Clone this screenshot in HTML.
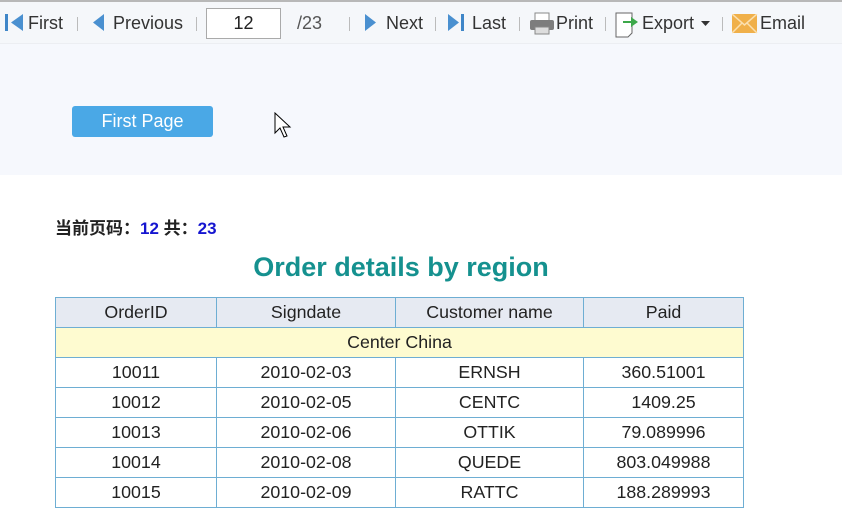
<!DOCTYPE html>
<html><head><style>
body{margin:0;width:842px;height:530px;background:#fff;font-family:"Liberation Sans",Arial,sans-serif;position:relative;overflow:hidden}
.top{position:absolute;left:0;top:0;width:842px;height:175px;background:#f6f8fd;border-top:2px solid #b8b8b8;box-sizing:border-box}
.tb{position:absolute;left:0;top:2px;width:842px;height:41px;background:#f5f7fa;border-bottom:1px solid #eceef2}
.t{position:absolute;top:11px;font-size:18px;color:#333}
.sep{position:absolute;top:15px;width:1px;height:14px;background:#bbb}
.inp{position:absolute;left:206px;top:6px;width:75px;height:31px;border:1px solid #aaa;background:#fff;box-sizing:border-box;text-align:center;font-size:18px;line-height:29px;color:#222}
.btn{position:absolute;left:72px;top:106px;width:141px;height:31px;background:#4aa8e6;border-radius:3px;color:#fff;font-size:18px;text-align:center;line-height:30px}
table{position:absolute;left:55px;top:297px;border-collapse:collapse;font-size:17.8px;color:#222;table-layout:fixed;width:689px}
td{border:1.5px solid #6eaed3;height:29px;text-align:center;padding:0}
</style></head><body>
<div class="top"></div>
<div class="tb">
<svg style="position:absolute;left:5px;top:11px" width="20" height="20"><rect x="0" y="1" width="3" height="17" fill="#3f86c8"/><path d="M18 1 L6 9.5 L18 18Z" fill="#4a90d0"/></svg>
<span class="t" style="left:28px">First</span><div class="sep" style="left:77px"></div>
<svg style="position:absolute;left:92px;top:11px" width="14" height="20"><path d="M12 1 L1 9.5 L12 18Z" fill="#4a90d0"/></svg>
<span class="t" style="left:113px">Previous</span><div class="sep" style="left:196px"></div>
<div class="inp">12</div>
<span class="t" style="left:297px;color:#555">/23</span><div class="sep" style="left:349px"></div>
<svg style="position:absolute;left:364px;top:11px" width="14" height="20"><path d="M1 1 L12 9.5 L1 18Z" fill="#4a90d0"/></svg>
<span class="t" style="left:386px">Next</span><div class="sep" style="left:435px"></div>
<svg style="position:absolute;left:447px;top:11px" width="20" height="20"><path d="M1 1 L12 9.5 L1 18Z" fill="#4a90d0"/><rect x="14" y="1" width="3" height="17" fill="#3f86c8"/></svg>
<span class="t" style="left:472px">Last</span><div class="sep" style="left:519px"></div>
<svg style="position:absolute;left:529px;top:10px" width="26" height="24"><rect x="6" y="1" width="14" height="8" fill="#fff" stroke="#888"/><rect x="1" y="8" width="24" height="10" rx="2" fill="#7d7d7d"/><rect x="6" y="15" width="14" height="7" fill="#ddd" stroke="#888"/></svg>
<span class="t" style="left:556px">Print</span><div class="sep" style="left:605px"></div>
<svg style="position:absolute;left:615px;top:8px" width="26" height="28"><path d="M1 3 H17 V23 L13 27 H1Z" fill="#fff" stroke="#666"/><path d="M8 11 H16 V7 L23 12 L16 17 V13 H8Z" fill="#3ca84a"/></svg>
<span class="t" style="left:642px">Export</span>
<svg style="position:absolute;left:701px;top:19px" width="10" height="6"><path d="M0 0 H9 L4.5 5Z" fill="#333"/></svg>
<div class="sep" style="left:722px"></div>
<svg style="position:absolute;left:732px;top:12px" width="26" height="20"><rect x="0" y="0" width="25" height="19" fill="#f0b04a"/><path d="M0 0 L12.5 11 L25 0 M0 19 L10 9 M25 19 L15 9" stroke="#fbe0b0" stroke-width="1.5" fill="none"/></svg>
<span class="t" style="left:760px">Email</span>
</div>
<div class="btn">First Page</div>
<svg style="position:absolute;left:274px;top:112px" width="20" height="28"><path d="M1 1 V21 L6 16 L10 25 L13 24 L9 15 L16 15Z" fill="#fff" stroke="#000" stroke-width="1"/></svg>
<div style="position:absolute;left:55px;top:214px;font-size:17px;font-weight:bold;font-family:'Liberation Sans','Noto Sans CJK SC',sans-serif;color:#222">当前页码：<span style="color:#1515d0">12</span> 共：<span style="color:#1515d0">23</span></div>
<div style="position:absolute;left:0;width:802px;top:252px;text-align:center;font-size:27px;font-weight:bold;color:#15918f">Order details by region</div>
<table>
<tr style="background:#e6eaf2"><td style="width:160px">OrderID</td><td style="width:178px">Signdate</td><td style="width:187px">Customer name</td><td>Paid</td></tr>
<tr style="background:#fefbd0"><td colspan="4">Center China</td></tr>
<tr><td>10011</td><td>2010-02-03</td><td>ERNSH</td><td>360.51001</td></tr>
<tr><td>10012</td><td>2010-02-05</td><td>CENTC</td><td>1409.25</td></tr>
<tr><td>10013</td><td>2010-02-06</td><td>OTTIK</td><td>79.089996</td></tr>
<tr><td>10014</td><td>2010-02-08</td><td>QUEDE</td><td>803.049988</td></tr>
<tr><td>10015</td><td>2010-02-09</td><td>RATTC</td><td>188.289993</td></tr>
</table>
</body></html>
